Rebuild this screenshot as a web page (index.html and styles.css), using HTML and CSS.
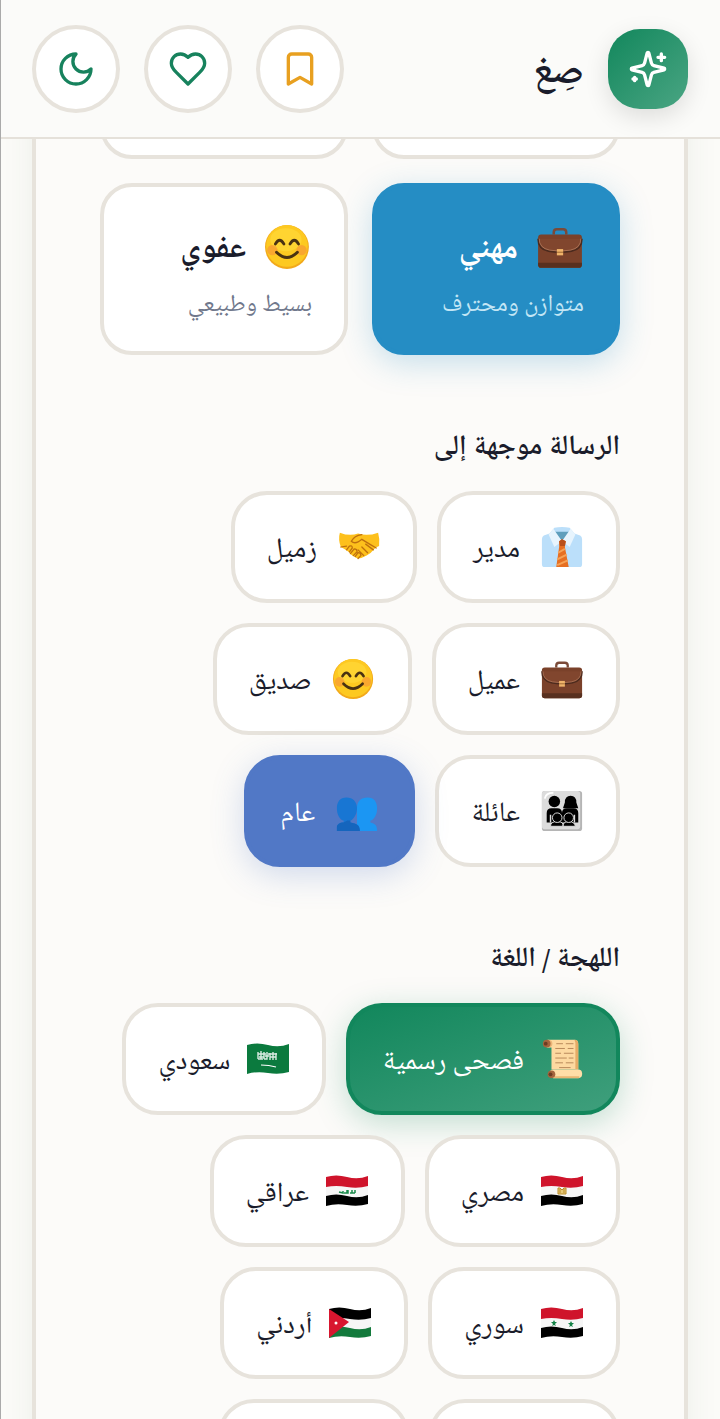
FILE: index.html
```html
<!DOCTYPE html>
<html lang="ar" dir="rtl">
<head>
    <meta charset="UTF-8">
    <meta name="viewport" content="width=device-width, initial-scale=1.0">
    <title>صِغ</title>
    <link rel="stylesheet" href="styles.css">
</head>
<body>

    <svg class="sprite" aria-hidden="true">
        <symbol id="smile" viewBox="0 -1 46 46">
            <circle cx="22" cy="22" r="21" fill="#f2a91b"/>
            <circle cx="22" cy="21" r="20" fill="#fdc921"/>
            <ellipse cx="21" cy="15" rx="15" ry="11" fill="#ffd431"/>
            <circle cx="8" cy="25" r="5" fill="#f58b3c" opacity=".55"/>
            <circle cx="36" cy="25" r="5" fill="#f58b3c" opacity=".55"/>
            <path d="M11 19q4-7 8 0M25 19q4-7 8 0M12 27q10 10 20 0" fill="none" stroke="#4a3212" stroke-width="2.8" stroke-linecap="round"/>
        </symbol>
        <symbol id="briefcase" viewBox="-1 -2 46 46">
            <path d="M16 9V7q0-3 3-3h6q3 0 3 3v2" fill="none" stroke="#7b4a38" stroke-width="2.4"/>
            <rect x="1" y="9" width="42" height="32" rx="3" fill="#7a412a"/>
            <path d="M1 36h42v2q0 3-3 3H4q-3 0-3-3z" fill="#58301f"/>
            <path d="M1 13q0 10 10 12 11 2 22 0 10-2 10-12" fill="#81462e" stroke="#4c2a1d" stroke-width="1.6"/>
            <path d="M2 13q0 9 10 11 10 2 20 0 10-2 10-11" fill="none" stroke="#b88062" stroke-width=".7"/>
            <rect x="19" y="23" width="6" height="6" fill="#f0b46a"/>
            <path d="M19 26h6" stroke="#a06a34"/>
        </symbol>
        <symbol id="shirt" viewBox="-1 -1 46 46">
            <path d="M14 2Q22 0 30 2L35 8l6 2q2 1 2 4v26q0 3-3 3H4q-3 0-3-3V14q0-3 2-4l6-2z" fill="#bbdffa"/>
            <path d="M14 6h16l-8 10z" fill="#5f9ebc"/>
            <path d="M13 3l9 13-8 6-6-13z" fill="#e7f4fd"/>
            <path d="M31 3l-9 13 8 6 6-13z" fill="#e7f4fd"/>
            <path d="M19 16l3-2 4 2-1 6 4 21H16l3-21z" fill="#e66f22"/>
            <path d="M18 28l7-4M17 35l10-5M17 41l11-5" stroke="#f6a256" stroke-width="2"/>
            <path d="M19 16l3-2 4 2-1 5h-5z" fill="#b9501a"/>
        </symbol>
        <symbol id="handshake" viewBox="-1 1 46 46">
            <path d="M2 9q10 4 19 1 10 3 21-1 2 7 1 14-3 1-5 3-4 5-8 7-5 3-9 3-6-2-10-7-4-3-8-5Q0 16 2 9z" fill="#fdc01c"/>
            <path d="M25 11q-8 1-11 7 4 4 11-2 8 5 15 9M29 21l8 6M25 24l6 6M21 27l6 6" fill="none" stroke="#bf700e" stroke-width="1.4" stroke-linecap="round"/>
            <path d="M9 27l3-4q3-1 3 2l-3 4M13 31l4-5q3 0 3 3l-4 4M18 34l3-4q3 0 3 3l-3 3M3 24l6-1" fill="#fdc01c" stroke="#bf700e" stroke-width="1.3" stroke-linecap="round"/>
        </symbol>
        <symbol id="family" viewBox="-1 -1 46 46">
            <rect x="1" y="1" width="42" height="42" rx="3" fill="#b5b5b5"/>
            <rect x="1" y="1" width="40" height="40" rx="3" fill="#dcdcdc"/>
            <path d="M4 9q1-6 9-6" fill="none" stroke="#fff" stroke-width="2"/>
            <circle cx="14" cy="12" r="6"/>
            <path d="M31 6q6 0 6 7l2 6H23l2-6q0-7 6-7z"/>
            <path d="M6 34V24q0-5 5-5h6q5 0 5 5 0-5 5-5h7q5 0 5 5v10z"/>
            <path d="M10 34v-8M35 34v-8" stroke="#dcdcdc" stroke-width="1.5"/>
            <g stroke="#dcdcdc" stroke-width="1">
                <path d="M10 38q0-5 7-5t6 5zM23 38q0-5 6-5t7 5z"/>
                <circle cx="17" cy="29" r="5"/>
                <circle cx="29" cy="29" r="5"/>
            </g>
        </symbol>
        <symbol id="people" viewBox="-1 -5 46 46">
            <path d="M33 4c7 0 10 5 10 11 0 7-3 12-7 13v2c5 1 7 3 7 9H22V15C22 8 26 4 33 4z" fill="#1b96f3"/>
            <path d="M11 4c7 0 11 5 11 11 0 7-4 12-7 13v2c7 1 10 3 10 9H1v-4c0-3 3-5 7-5v-2C4 27 1 22 1 15 1 9 4 4 11 4z" fill="#1876d3"/>
            <path d="M15 28v2c7 1 10 3 10 9H1v-4c0-3 3-5 7-5l4-2z" fill="#1565bd"/>
        </symbol>
        <symbol id="scroll" viewBox="-1 -1 46 46">
            <path d="M7 2h28q4 0 4 4v27H11V10H6z" fill="#fdd9a0"/>
            <path d="M35 2q4 0 4 4v27h-3V5z" fill="#e5ac66"/>
            <path d="M7 2q5 0 5 4t-5 4z" fill="#eab577"/>
            <circle cx="6" cy="6" r="4" fill="#a4643d"/>
            <circle cx="5" cy="6" r="2" fill="#6d3c22"/>
            <rect x="9" y="33" width="34" height="9" rx="4" fill="#ffdda7"/>
            <path d="M13 41h27" stroke="#e9b774" stroke-width="2"/>
            <circle cx="11" cy="38" r="4" fill="#a4643d"/>
            <circle cx="10" cy="38" r="2" fill="#6d3c22"/>
            <path d="M16 6h7M26 6h8M15 11h10M28 11h6M15 16h6M24 16h10M15 21h12M29 21h5M15 26h8M26 26h8M19 31h12" stroke="#b78658" stroke-width="1"/>
        </symbol>
        <symbol id="flag-sa" viewBox="0 0 44 44">
            <path d="M1 8q10-3 21 0t21-1v28q-10 3-21 1t-21 1z" fill="#0b7a3e"/>
            <path d="M12 15v7M15 14v8M12 22h5M18 15v7M21 15v7h-3M24 16v7M27 15v8M24 20h6M30 16v7M12 17h8M22 17h9M13 20h5M19 19h4" fill="none" stroke="#fff" stroke-width="1.4" opacity=".85"/>
            <path d="M15 28q8 0 15 2" fill="none" stroke="#fff" stroke-width="1.2"/>
        </symbol>
        <symbol id="flag-eg" viewBox="0 0 44 44">
            <path d="M1 8q10-3 21 0t21-1v28q-10 3-21 1t-21 1z" fill="#f6f6f6"/>
            <path d="M1 8q10-3 21 0t21-1v10q-10 3-21 1t-21 0z" fill="#cf142b"/>
            <path d="M1 27q10-3 21 0t21-1v9q-10 3-21 1t-21 1z"/>
            <path d="M18 19h2l2 2 2-2h2v6h-8zM20 20v4M24 20v4" fill="#e6c878" stroke="#b98b27"/>
        </symbol>
        <symbol id="flag-iq" viewBox="0 0 44 44">
            <path d="M1 8q10-3 21 0t21-1v28q-10 3-21 1t-21 1z" fill="#f6f6f6"/>
            <path d="M1 8q10-3 21 0t21-1v10q-10 3-21 1t-21 0z" fill="#cf142b"/>
            <path d="M1 27q10-3 21 0t21-1v9q-10 3-21 1t-21 1z"/>
            <path d="M14 23l4 1v-2M19 24h4v-3M22 21v3M25 24h5M27 21v3M30 21v3" fill="none" stroke="#1a8a4b" stroke-width="1.5"/>
        </symbol>
        <symbol id="flag-sy" viewBox="0 0 44 44">
            <path d="M1 8q10-3 21 0t21-1v28q-10 3-21 1t-21 1z" fill="#f6f6f6"/>
            <path d="M1 8q10-3 21 0t21-1v10q-10 3-21 1t-21 0z" fill="#cf142b"/>
            <path d="M1 27q10-3 21 0t21-1v9q-10 3-21 1t-21 1z"/>
            <path d="M14 19l1 2h2l-2 2 1 2-2-1-2 1 1-2-2-2h2zM31 20l1 2h2l-2 2 1 2-2-1-2 1 1-2-2-2h2z" fill="#138246"/>
        </symbol>
        <symbol id="flag-jo" viewBox="0 0 44 44">
            <path d="M1 8q10-3 21 0t21-1v28q-10 3-21 1t-21 1z" fill="#f6f6f6"/>
            <path d="M1 8q10-3 21 0t21-1v10q-10 3-21 1t-21 0z"/>
            <path d="M1 27q10-3 21 0t21-1v9q-10 3-21 1t-21 1z" fill="#137a3c"/>
            <path d="M1 8l20 13L1 37z" fill="#d8162f"/>
            <circle cx="8" cy="22" r="1.5" fill="#fff"/>
        </symbol>
    </svg>

    <header class="header">
        <div class="brand">
            <div class="logo">
                <svg class="icon" viewBox="0 0 24 24"><path d="M9.937 15.5A2 2 0 0 0 8.5 14.063l-6.135-1.582a.5.5 0 0 1 0-.962L8.5 9.936A2 2 0 0 0 9.937 8.5l1.582-6.135a.5.5 0 0 1 .963 0L14.063 8.5A2 2 0 0 0 15.5 9.937l6.135 1.581a.5.5 0 0 1 0 .964L15.5 14.063a2 2 0 0 0-1.437 1.437l-1.582 6.135a.5.5 0 0 1-.963 0z"/><path d="M20 3v4M22 5h-4M4 17v2M5 18H3"/></svg>
            </div>
            <h1>صِغ</h1>
        </div>
        <div class="actions">
            <button class="round-btn saved" aria-label="المحفوظات">
                <svg class="icon" viewBox="0 0 24 24"><path d="m19 21-7-4-7 4V5a2 2 0 0 1 2-2h10a2 2 0 0 1 2 2z"/></svg>
            </button>
            <button class="round-btn" aria-label="المفضلة">
                <svg class="icon" viewBox="0 0 24 24"><path d="M19 14c1.49-1.46 3-3.21 3-5.5A5.5 5.5 0 0 0 16.5 3c-1.76 0-3 .5-4.5 2-1.5-1.5-2.74-2-4.5-2A5.5 5.5 0 0 0 2 8.5c0 2.3 1.5 4.05 3 5.5l7 7Z"/></svg>
            </button>
            <button class="round-btn" aria-label="الوضع الليلي">
                <svg class="icon" viewBox="0 0 24 24"><path d="M12 3a6 6 0 0 0 9 9 9 9 0 1 1-9-9Z"/></svg>
            </button>
        </div>
    </header>

    <main class="panel">
        <div class="tones">
            <div class="tone tone-top"></div>
            <div class="tone tone-top"></div>
            <button class="tone selected">
                <span class="tone-name"><svg class="emoji-lg"><use href="#briefcase"/></svg><span class="label">مهني</span></span>
                <span class="tone-desc">متوازن ومحترف</span>
            </button>
            <button class="tone">
                <span class="tone-name"><svg class="emoji-lg"><use href="#smile"/></svg><span class="label">عفوي</span></span>
                <span class="tone-desc">بسيط وطبيعي</span>
            </button>
        </div>

        <section>
            <h2>الرسالة موجهة إلى</h2>
            <div class="chips audience">
                <button class="chip"><svg class="emoji"><use href="#shirt"/></svg><span class="label">مدير</span></button>
                <button class="chip"><svg class="emoji"><use href="#handshake"/></svg><span class="label">زميل</span></button>
                <button class="chip"><svg class="emoji"><use href="#briefcase"/></svg><span class="label">عميل</span></button>
                <button class="chip"><svg class="emoji"><use href="#smile"/></svg><span class="label">صديق</span></button>
                <button class="chip"><svg class="emoji"><use href="#family"/></svg><span class="label">عائلة</span></button>
                <button class="chip general"><svg class="emoji"><use href="#people"/></svg><span class="label">عام</span></button>
            </div>
        </section>

        <section>
            <h2>اللهجة / اللغة</h2>
            <div class="chips">
                <button class="chip formal"><svg class="emoji"><use href="#scroll"/></svg><span class="label">فصحى رسمية</span></button>
                <button class="chip"><svg class="emoji"><use href="#flag-sa"/></svg><span class="label">سعودي</span></button>
                <button class="chip"><svg class="emoji"><use href="#flag-eg"/></svg><span class="label">مصري</span></button>
                <button class="chip"><svg class="emoji"><use href="#flag-iq"/></svg><span class="label">عراقي</span></button>
                <button class="chip"><svg class="emoji"><use href="#flag-sy"/></svg><span class="label">سوري</span></button>
                <button class="chip"><svg class="emoji"><use href="#flag-jo"/></svg><span class="label">أردني</span></button>
                <div class="chip chip-next"></div>
                <div class="chip chip-next"></div>
            </div>
        </section>
    </main>

</body>
</html>
```

FILE: styles.css
```css
* {
    margin: 0;
    padding: 0;
    box-sizing: border-box;
}

body {
    height: 100vh;
    overflow: hidden;
    padding: 0 32px;
    background: #fbfbf8;
    border-left: 1px solid #aaa;
    color: #1a1c2b;
    font-family: "Noto Naskh Arabic UI", "Noto Naskh Arabic", "DejaVu Sans", sans-serif;
}

button {
    font-family: inherit;
    color: inherit;
    cursor: pointer;
}

.sprite {
    position: absolute;
    width: 0;
    height: 0;
}

/* Header */
.header {
    position: fixed;
    top: 0;
    left: 1px;
    right: 0;
    z-index: 10;
    display: flex;
    justify-content: space-between;
    align-items: center;
    padding: 25px 32px 24px 31px;
    background: #fbfbf9;
    border-bottom: 2px solid #e5e1da;
}

.brand,
.actions {
    display: flex;
    align-items: center;
    gap: 24px;
}

.logo {
    display: flex;
    justify-content: center;
    align-items: center;
    width: 80px;
    height: 80px;
    border-radius: 32px;
    background: linear-gradient(135deg, #12875c, #4aa583);
    box-shadow: 0 8px 24px rgba(0, 0, 0, 0.12);
    color: white;
}

h1 {
    padding-top: 8px;
    font-size: 40px;
    font-weight: 600;
    line-height: 56px;
}

.icon {
    width: 40px;
    height: 40px;
    fill: none;
    stroke: currentColor;
    stroke-width: 2;
    stroke-linecap: round;
    stroke-linejoin: round;
}

.round-btn {
    display: flex;
    justify-content: center;
    align-items: center;
    width: 88px;
    height: 88px;
    border: 4px solid #e7e3dc;
    border-radius: 50%;
    background: white;
    color: #17825d;
}

.saved {
    color: #e8a020;
}

/* Form panel */
.panel {
    margin-left: -1px;
    min-height: 100vh;
    padding: 0 64px;
    border: solid #e7e3dc;
    border-width: 0 4px;
    background: #fcfbf9;
    box-shadow: 0 8px 32px rgba(60, 80, 60, 0.07);
}

.tones {
    display: grid;
    grid-template-columns: 1fr 1fr;
    gap: 24px;
}

.tone {
    display: flex;
    flex-direction: column;
    gap: 8px;
    padding: 32px 32px 24px;
    border: 4px solid #e7e3dc;
    border-radius: 32px;
    background: white;
    text-align: right;
}

.tone-top {
    height: 159px;
}

.tone-name {
    display: flex;
    align-items: center;
    gap: 18px;
    height: 56px;
    font-size: 32px;
    font-weight: 700;
}

.tone-desc {
    color: #70788c;
    font-size: 24px;
    line-height: 44px;
}

.tone.selected {
    border-color: #258dc4;
    background: #258dc4;
    box-shadow: 0 8px 32px rgba(37, 141, 196, 0.25);
    color: white;
}

.selected .tone-desc {
    color: #c3e6f5;
}

.emoji-lg {
    width: 48px;
    height: 48px;
}

.emoji {
    width: 44px;
    height: 44px;
}

.label {
    padding-top: 6px;
    line-height: 48px;
}

section {
    margin-top: 64px;
}

h2 {
    margin-bottom: 16px;
    font-size: 28px;
    font-weight: 600;
    line-height: 56px;
}

.chips {
    display: flex;
    flex-wrap: wrap;
    gap: 20px;
}

.chip {
    display: flex;
    align-items: center;
    gap: 16px;
    height: 112px;
    padding: 0 32px;
    border: 4px solid #e7e3dc;
    border-radius: 36px;
    background: white;
    font-size: 28px;
}

.audience .chip {
    gap: 20px;
}

.chip.general {
    border-color: #5178c6;
    background: #5178c6;
    box-shadow: 0 8px 32px rgba(81, 120, 198, 0.25);
    color: white;
}

.chip.formal {
    border-color: #12875c;
    background: linear-gradient(160deg, #12875c, #3f9f7c);
    box-shadow: 0 8px 32px rgba(18, 135, 92, 0.25);
    color: white;
}

.chip-next {
    width: 191px;
}
```
